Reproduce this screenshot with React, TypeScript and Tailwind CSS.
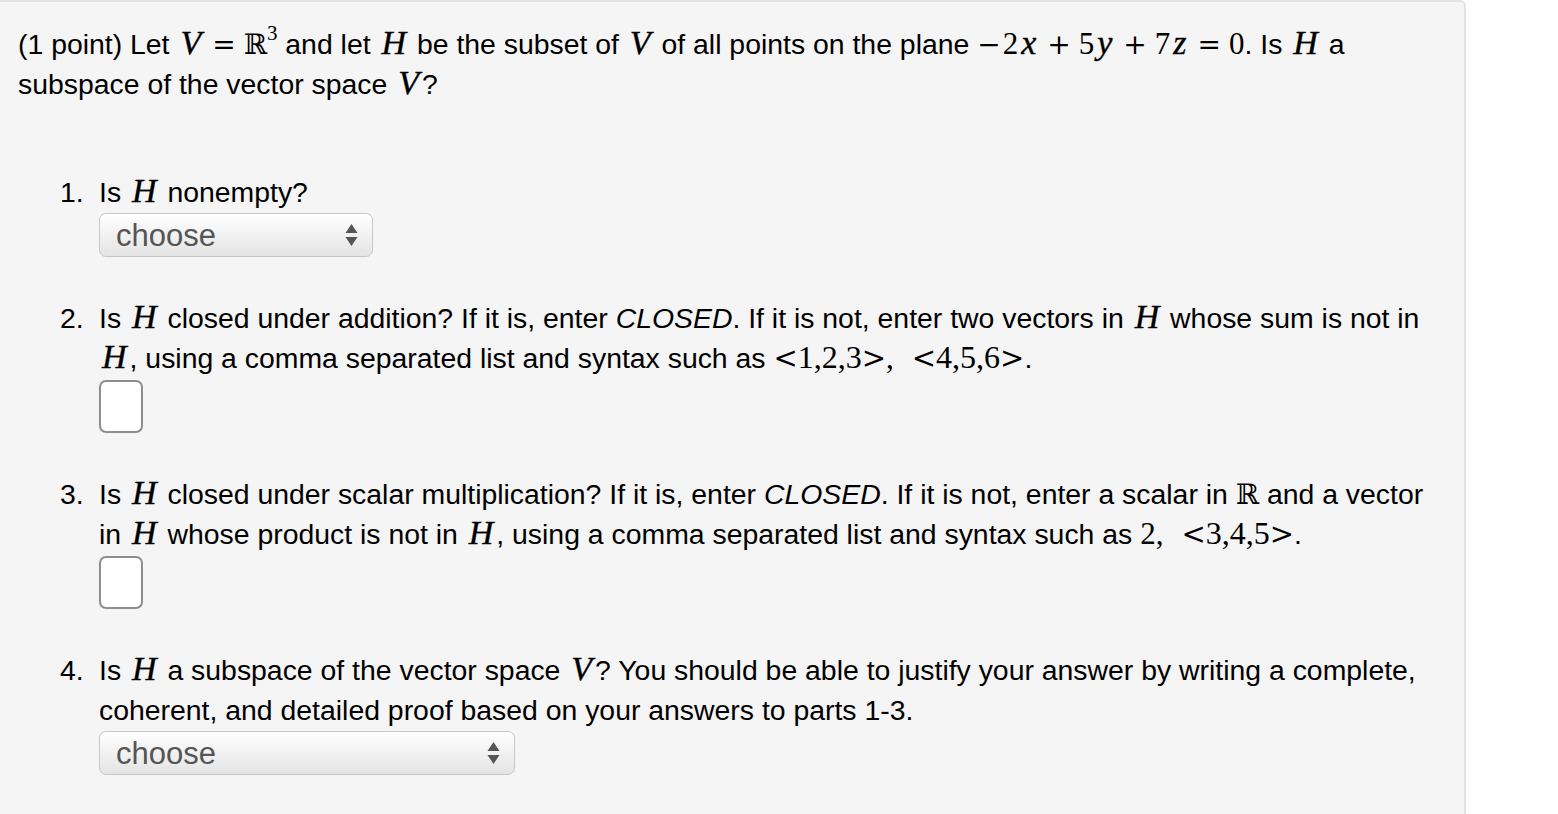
import React from 'react';

function V({ children }: { children: React.ReactNode }) {
  return (
    <span className="font-['Liberation_Serif',serif] italic text-[34px] leading-none mx-[3px] [-webkit-text-stroke:0.4px_black]">
      {children}
    </span>
  );
}

function Rm({ children }: { children: React.ReactNode }) {
  return <span className="font-['Liberation_Serif',serif] text-[31px] leading-none">{children}</span>;
}

function Op({ children }: { children: React.ReactNode }) {
  return <span className="font-['DejaVu_Serif',serif] text-[28px] leading-none mx-[8px]">{children}</span>;
}

function Reals() {
  return <span className="font-['DejaVu_Serif',serif] text-[28px] leading-none">ℝ</span>;
}

function Vec({ nums }: { nums: string }) {
  return (
    <span className="font-['Liberation_Serif',serif] text-[32px] leading-none">
      <span className="font-['DejaVu_Serif',serif] text-[29px]">&lt;</span>
      {nums}
      <span className="font-['DejaVu_Serif',serif] text-[29px]">&gt;</span>
    </span>
  );
}

function Choose({ width }: { width: string }) {
  return (
    <div
      className={`${width} h-[44px] mt-[1px] rounded-[7px] border border-[#c6c6c6] bg-gradient-to-b from-white to-[#e4e4e4] shadow-[inset_0_1px_0_#fff] flex items-center justify-between pl-[16px] pr-[14px] text-[#555] text-[31px] leading-none`}
    >
      <span>choose</span>
      <svg width="13" height="24" viewBox="0 0 13 24">
        <polygon points="6.5,1 12.5,10 0.5,10" fill="#555" />
        <polygon points="0.5,14 12.5,14 6.5,23" fill="#555" />
      </svg>
    </div>
  );
}

function Box() {
  return <div className="w-[44px] h-[53px] mt-[2px] rounded-[7px] border-2 border-[#8d8d8d] bg-white" />;
}

function Item({ n, children }: { n: number; children: React.ReactNode }) {
  return (
    <li className="flex">
      <span className="w-[39px] shrink-0">{n}.</span>
      <div className="flex flex-col">{children}</div>
    </li>
  );
}

export default function App() {
  return (
    <div className="min-h-[814px] bg-white font-['Liberation_Sans',Arial,sans-serif] text-[28.4px] leading-[40px] text-black">
      <div className="w-[1466px] min-h-[814px] bg-[#f5f5f5] border-t-2 border-r-2 border-[#e4e4e4] rounded-tr-[6px] pt-[22px]">
        <p className="pl-[18px] whitespace-nowrap">
          (1 point) Let <V>V</V>
          <Op>=</Op>
          <Reals />
          <sup className="font-['Liberation_Serif',serif] text-[21px] -top-[14px]">3</sup> and let <V>H</V> be the
          subset of <V>V</V> of all points on the plane{' '}
          <span className="font-['DejaVu_Serif',serif] text-[28px] leading-none mr-[2px]">−</span>
          <Rm>2</Rm>
          <V>x</V>
          <Op>+</Op>
          <Rm>5</Rm>
          <V>y</V>
          <Op>+</Op>
          <Rm>7</Rm>
          <V>z</V>
          <Op>=</Op>
          <Rm>0</Rm>. Is <V>H</V> a
          <br />
          subspace of the vector space <V>V</V>?
        </p>

        <ol className="pl-[60px] mt-[68px] flex flex-col gap-[41px] whitespace-nowrap">
          <Item n={1}>
            <div>
              Is <V>H</V> nonempty?
            </div>
            <Choose width="w-[274px]" />
          </Item>
          <Item n={2}>
            <div>
              Is <V>H</V> closed under addition? If it is, enter <i>CLOSED</i>. If it is not, enter two vectors in{' '}
              <V>H</V> whose sum is not in
            </div>
            <div>
              <V>H</V>, using a comma separated list and syntax such as <Vec nums="1,2,3" />
              <Rm>,</Rm>
              <span className="inline-block w-[18px]" />
              <Vec nums="4,5,6" />.
            </div>
            <Box />
          </Item>
          <Item n={3}>
            <div>
              Is <V>H</V> closed under scalar multiplication? If it is, enter <i>CLOSED</i>. If it is not, enter a
              scalar in <Reals /> and a vector
            </div>
            <div>
              in <V>H</V> whose product is not in <V>H</V>, using a comma separated list and syntax such as{' '}
              <Rm>2,</Rm>
              <span className="inline-block w-[18px]" />
              <Vec nums="3,4,5" />.
            </div>
            <Box />
          </Item>
          <Item n={4}>
            <div>
              Is <V>H</V> a subspace of the vector space <V>V</V>? You should be able to justify your answer by
              writing a complete,
            </div>
            <div>coherent, and detailed proof based on your answers to parts 1-3.</div>
            <Choose width="w-[416px]" />
          </Item>
        </ol>
      </div>
    </div>
  );
}
